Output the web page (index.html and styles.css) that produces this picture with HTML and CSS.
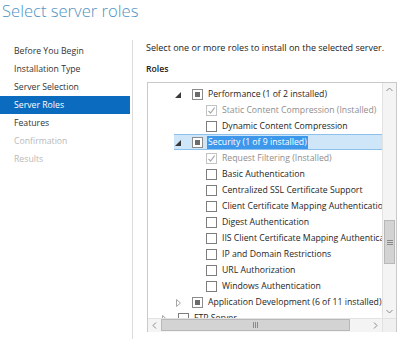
FILE: index.html
```html
<!DOCTYPE html>
<html>
<head>
<meta charset="utf-8">
<link rel="stylesheet" href="styles.css">
</head>
<body>
<div class="page">
  <h1 class="title">Select server roles</h1>
  <div class="main">
    <nav class="nav">
      <div class="nav-item">Before You Begin</div>
      <div class="nav-item">Installation Type</div>
      <div class="nav-item">Server Selection</div>
      <div class="nav-item selected">Server Roles</div>
      <div class="nav-item">Features</div>
      <div class="nav-item disabled">Confirmation</div>
      <div class="nav-item disabled">Results</div>
    </nav>
    <section class="content">
      <p class="intro">Select one or more roles to install on the selected server.</p>
      <div class="roles-label">Roles</div>
      <div class="tree-box">
        <div class="tree-view">
          <div class="tree-rows">
            <div class="row l2">
              <span class="arrow"><svg width="6" height="6" viewBox="0 0 6 6"><polygon points="6,0 6,6 0,6" fill="#3a3a3a"/></svg></span>
              <span class="cb partial"><i></i></span>
              <span class="label">Performance (1 of 2 installed)</span>
            </div>
            <div class="row l3 installed">
              <span class="arrow"></span>
              <span class="cb checked"><svg width="9" height="9" viewBox="0 0 9 9"><path d="M1.5 4.8 L3.6 7 L7.6 1.6" fill="none" stroke="#a9a9a9" stroke-width="1.2"/></svg></span>
              <span class="label">Static Content Compression (Installed)</span>
            </div>
            <div class="row l3">
              <span class="arrow"></span>
              <span class="cb"></span>
              <span class="label">Dynamic Content Compression</span>
            </div>
            <div class="row l2 focused">
              <span class="arrow"><svg width="6" height="6" viewBox="0 0 6 6"><polygon points="6,0 6,6 0,6" fill="#3a3a3a"/></svg></span>
              <span class="cb partial"><i></i></span>
              <span class="label sel">Security (1 of 9 installed)</span>
            </div>
            <div class="row l3 installed">
              <span class="arrow"></span>
              <span class="cb checked"><svg width="9" height="9" viewBox="0 0 9 9"><path d="M1.5 4.8 L3.6 7 L7.6 1.6" fill="none" stroke="#a9a9a9" stroke-width="1.2"/></svg></span>
              <span class="label">Request Filtering (Installed)</span>
            </div>
            <div class="row l3"><span class="arrow"></span><span class="cb"></span><span class="label">Basic Authentication</span></div>
            <div class="row l3"><span class="arrow"></span><span class="cb"></span><span class="label">Centralized SSL Certificate Support</span></div>
            <div class="row l3"><span class="arrow"></span><span class="cb"></span><span class="label">Client Certificate Mapping Authentication</span></div>
            <div class="row l3"><span class="arrow"></span><span class="cb"></span><span class="label">Digest Authentication</span></div>
            <div class="row l3"><span class="arrow"></span><span class="cb"></span><span class="label">IIS Client Certificate Mapping Authentication</span></div>
            <div class="row l3"><span class="arrow"></span><span class="cb"></span><span class="label">IP and Domain Restrictions</span></div>
            <div class="row l3"><span class="arrow"></span><span class="cb"></span><span class="label">URL Authorization</span></div>
            <div class="row l3"><span class="arrow"></span><span class="cb"></span><span class="label">Windows Authentication</span></div>
            <div class="row l2">
              <span class="arrow"><svg width="5" height="8" viewBox="0 0 5 8"><polygon points="0.5,0.5 4.5,4 0.5,7.5" fill="none" stroke="#a6a6a6" stroke-width="1"/></svg></span>
              <span class="cb partial"><i></i></span>
              <span class="label">Application Development (6 of 11 installed)</span>
            </div>
            <div class="row l1">
              <span class="arrow"><svg width="5" height="8" viewBox="0 0 5 8"><polygon points="0.5,0.5 4.5,4 0.5,7.5" fill="none" stroke="#a6a6a6" stroke-width="1"/></svg></span>
              <span class="cb"></span>
              <span class="label">FTP Server</span>
            </div>
          </div>
          <div class="vscroll">
            <div class="sbtn"><svg width="7" height="5" viewBox="0 0 7 5"><path d="M0.5 4 L3.5 1 L6.5 4" fill="none" stroke="#8a8a8a" stroke-width="1"/></svg></div>
            <div class="vtrack">
              <div class="vthumb"><svg width="6" height="5" viewBox="0 0 6 5"><path d="M0 0.5H6M0 2.5H6M0 4.5H6" stroke="#8a8a8a" stroke-width="1"/></svg></div>
            </div>
            <div class="sbtn"><svg width="7" height="5" viewBox="0 0 7 5"><path d="M0.5 1 L3.5 4 L6.5 1" fill="none" stroke="#8a8a8a" stroke-width="1"/></svg></div>
          </div>
        </div>
        <div class="hscroll-row">
          <div class="hscroll">
            <div class="sbtn"><svg width="5" height="7" viewBox="0 0 5 7"><path d="M4 0.5 L1 3.5 L4 6.5" fill="none" stroke="#8a8a8a" stroke-width="1"/></svg></div>
            <div class="htrack">
              <div class="hthumb"><svg width="5" height="6" viewBox="0 0 5 6"><path d="M0.5 0V6M2.5 0V6M4.5 0V6" stroke="#8a8a8a" stroke-width="1"/></svg></div>
            </div>
            <div class="sbtn"><svg width="5" height="7" viewBox="0 0 5 7"><path d="M1 0.5 L4 3.5 L1 6.5" fill="none" stroke="#8a8a8a" stroke-width="1"/></svg></div>
          </div>
          <div class="corner"></div>
        </div>
      </div>
    </section>
  </div>
</div>
</body>
</html>
```
FILE: styles.css
```css
html, body {
  margin: 0;
  padding: 0;
  background: #ffffff;
}
body {
  font-family: "Open Sans", "Noto Sans", sans-serif;
  font-size: 8.7px;
  color: #1e1e1e;
  width: 401px;
  height: 339px;
  overflow: hidden;
}
.page {
  display: flex;
  flex-direction: column;
  height: 339px;
}
.title {
  margin: 0;
  height: 40px;
  padding-left: 2px;
  font-size: 16.6px;
  font-weight: 300;
  line-height: 21px;
  color: #4e93c4;
  box-sizing: border-box;
  flex: none;
}
.main {
  display: flex;
  flex: 1;
  min-height: 0;
}
.nav {
  width: 133px;
  flex: none;
  box-sizing: border-box;
  border-right: 1px solid #dcdcdc;
  padding-top: 2px;
}
.nav-item {
  height: 18px;
  line-height: 18px;
  padding-left: 14px;
  margin-right: 2px;
  color: #333333;
}
.nav-item.selected {
  background: #0b6cbf;
  color: #ffffff;
}
.nav-item.disabled {
  color: #b9b9b9;
}
.content {
  flex: 1;
  min-width: 0;
  padding-left: 13px;
  padding-right: 4px;
}
.intro {
  margin: 0;
  height: 15px;
  line-height: 15px;
  font-size: 9px;
  color: #222222;
  white-space: nowrap;
}
.roles-label {
  margin-top: 7px;
  height: 15px;
  line-height: 15px;
  font-weight: 600;
  color: #222222;
}
.tree-box {
  margin-top: 5px;
  margin-left: 1px;
  height: 250px;
  border: 1px solid #c9c9c9;
  box-sizing: border-box;
  display: flex;
  flex-direction: column;
}
.tree-view {
  display: flex;
  height: 235px;
  flex: none;
}
.tree-rows {
  flex: 1;
  min-width: 0;
  overflow: hidden;
  padding-top: 3px;
  white-space: nowrap;
}
.row {
  display: flex;
  align-items: center;
  height: 16px;
  box-sizing: border-box;
}
.row.l1 { margin-left: 12px; }
.row.l2 { margin-left: 26px; }
.row.l3 { margin-left: 40px; }
.row.focused {
  background: #cfe6f8;
  border-top: 1px solid #8cc1ee;
  border-bottom: 1px solid #8cc1ee;
}
.arrow {
  width: 8px;
  height: 14px;
  display: flex;
  align-items: center;
  justify-content: center;
  flex: none;
}
.arrow svg { display: block; margin-top: 2px; }
.cb {
  margin-left: 10px;
  width: 11px;
  height: 11px;
  box-sizing: border-box;
  border: 1px solid #7d7d7d;
  background: #ffffff;
  flex: none;
  display: flex;
  align-items: center;
  justify-content: center;
}
.cb.partial {
  border-color: #8c8c8c;
  padding: 2px;
}
.cb.partial i {
  display: block;
  width: 5px;
  height: 5px;
  background: #6c6c6c;
}
.cb.checked {
  border-color: #c3c3c3;
}
.cb svg { display: block; }
.label {
  margin-left: 5px;
  line-height: 13px;
}
.label.sel {
  margin-left: 4px;
  padding: 0 1px;
  background: #3d97ea;
  color: #ffffff;
}
.installed .label {
  color: #8e8e8e;
}
.vscroll {
  width: 13px;
  flex: none;
  border-left: 1px solid #e2e2e2;
  background: #f4f4f4;
  display: flex;
  flex-direction: column;
}
.sbtn {
  width: 13px;
  height: 13px;
  flex: none;
  display: flex;
  align-items: center;
  justify-content: center;
}
.sbtn svg { display: block; }
.vtrack {
  flex: 1;
  padding-top: 124px;
}
.vthumb {
  height: 44px;
  margin: 0 1px;
  background: #d3d3d3;
  border: 1px solid #b8b8b8;
  box-sizing: border-box;
  display: flex;
  align-items: center;
  justify-content: center;
}
.vthumb svg { display: block; }
.hscroll-row {
  display: flex;
  height: 13px;
  flex: none;
  border-top: 1px solid #e2e2e2;
}
.hscroll {
  flex: 1;
  display: flex;
  background: #f4f4f4;
}
.htrack {
  flex: 1;
  padding-right: 19px;
}
.hthumb {
  height: 12px;
  background: #d3d3d3;
  border: 1px solid #b8b8b8;
  box-sizing: border-box;
  display: flex;
  align-items: center;
  justify-content: center;
}
.hthumb svg { display: block; }
.corner {
  width: 14px;
  flex: none;
  background: #f0f0f0;
  border-left: 1px solid #e2e2e2;
  box-sizing: border-box;
}
```
